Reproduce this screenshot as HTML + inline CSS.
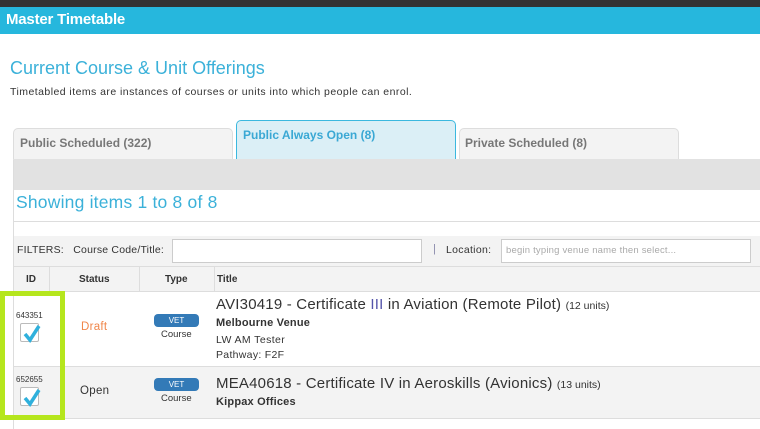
<!DOCTYPE html><html><head><style>
body{margin:0;width:760px;height:429px;overflow:hidden;background:#fff;font-family:"Liberation Sans",sans-serif;position:relative}
div,span{position:absolute;box-sizing:border-box}
.t{white-space:nowrap}
</style></head><body>
<div style="left:0;top:0;width:760px;height:7px;background:#333"></div>
<div style="left:0;top:7px;width:760px;height:27px;background:#26b7dd"></div>
<div class="t" style="left:6px;top:11px;color:#fff;font-weight:bold;font-size:15px;letter-spacing:-0.2px">Master Timetable</div>
<div class="t" style="left:10px;top:58px;color:#3bb1d9;font-size:18px">Current Course &amp; Unit Offerings</div>
<div class="t" style="left:10px;top:86px;color:#333;font-size:10.5px;letter-spacing:0.45px">Timetabled items are instances of courses or units into which people can enrol.</div>
<div style="left:13px;top:128px;width:220px;height:32px;background:#f3f3f3;border:1px solid #ddd;border-bottom:none;border-radius:5px 5px 0 0"></div>
<div class="t" style="left:20px;top:136px;color:#777;font-weight:bold;font-size:12px">Public Scheduled (322)</div>
<div style="left:236px;top:120px;width:220px;height:40px;background:#dbeff6;border:1px solid #3bb8df;border-bottom:none;border-radius:5px 5px 0 0"></div>
<div class="t" style="left:243px;top:128px;color:#3aa8d4;font-weight:bold;font-size:12px">Public Always Open (8)</div>
<div style="left:459px;top:128px;width:220px;height:32px;background:#f3f3f3;border:1px solid #ddd;border-bottom:none;border-radius:5px 5px 0 0"></div>
<div class="t" style="left:465px;top:136px;color:#777;font-weight:bold;font-size:12px">Private Scheduled (8)</div>
<div style="left:13px;top:159px;width:747px;height:31px;background:#e2e2e2"></div>
<div style="left:13px;top:160px;width:1px;height:269px;background:#ddd"></div>
<div class="t" style="left:16px;top:192px;color:#3bb1d9;font-size:17.5px;letter-spacing:0.2px">Showing items 1 to 8 of 8</div>
<div style="left:14px;top:221px;width:746px;height:1px;background:#ddd"></div>
<div style="left:14px;top:236px;width:746px;height:31px;background:#f3f3f3;border-bottom:1px solid #ddd"></div>
<div class="t" style="left:17px;top:244px;color:#333;font-size:10.5px;letter-spacing:0.2px">FILTERS:&nbsp;&nbsp; Course Code/Title:</div>
<div style="left:172px;top:239px;width:250px;height:24px;background:#fff;border:1px solid #ccc"></div>
<div class="t" style="left:433px;top:243px;color:#88a;font-size:11px">|</div>
<div class="t" style="left:446px;top:244px;color:#333;font-size:10.5px;letter-spacing:0.3px">Location:</div>
<div style="left:501px;top:239px;width:250px;height:24px;background:#fff;border:1px solid #ccc"></div>
<div class="t" style="left:506px;top:245px;color:#aaa;font-size:9.5px;letter-spacing:0.2px">begin typing venue name then select...</div>
<div style="left:14px;top:267px;width:746px;height:25px;background:#f3f3f3;border-bottom:1px solid #ddd"></div>
<div style="left:49px;top:267px;width:1px;height:25px;background:#ddd"></div>
<div style="left:139px;top:267px;width:1px;height:25px;background:#ddd"></div>
<div style="left:214px;top:267px;width:1px;height:25px;background:#ddd"></div>
<div class="t" style="left:26px;top:274px;color:#333;font-weight:bold;font-size:10px">ID</div>
<div class="t" style="left:79px;top:274px;color:#333;font-weight:bold;font-size:10px">Status</div>
<div class="t" style="left:165px;top:274px;color:#333;font-weight:bold;font-size:10px">Type</div>
<div class="t" style="left:217px;top:274px;color:#333;font-weight:bold;font-size:10px">Title</div>
<div style="left:14px;top:366px;width:746px;height:53px;background:#f3f3f3;border-top:1px solid #ddd;border-bottom:1px solid #ddd"></div>
<div class="t" style="left:16px;top:311px;color:#333;font-size:8px">643351</div>
<div class="t" style="left:16px;top:375px;color:#333;font-size:8px">652655</div>
<div style="left:20px;top:323px;width:19px;height:19px;border:1px solid #bbb;border-radius:2px;background:#fff"></div>
<div style="left:20px;top:387px;width:19px;height:19px;border:1px solid #bbb;border-radius:2px;background:#fff"></div>
<svg style="position:absolute;left:20px;top:320px" width="22" height="26"><path d="M5 14 L10 20 L19 6" stroke="#2fb0dc" stroke-width="3.5" fill="none"/></svg>
<svg style="position:absolute;left:20px;top:384px" width="22" height="26"><path d="M5 14 L10 20 L19 6" stroke="#2fb0dc" stroke-width="3.5" fill="none"/></svg>
<div style="left:0;top:291px;width:65px;height:129px;border:5px solid #b5e61d"></div>
<div class="t" style="left:81px;top:321px;color:#f0864a;font-size:11.5px;letter-spacing:0.3px">Draft</div>
<div class="t" style="left:80px;top:385px;color:#333;font-size:11.5px;letter-spacing:0.3px">Open</div>
<div style="left:154px;top:314px;width:45px;height:13px;background:#337ab7;border-radius:4px;color:#fff;font-size:8px;text-align:center;line-height:13px">VET</div>
<div class="t" style="left:161px;top:329px;color:#333;font-size:9.5px">Course</div>
<div style="left:154px;top:378px;width:45px;height:13px;background:#337ab7;border-radius:4px;color:#fff;font-size:8px;text-align:center;line-height:13px">VET</div>
<div class="t" style="left:161px;top:393px;color:#333;font-size:9.5px">Course</div>
<div class="t" style="left:216px;top:296px;color:#333;font-size:15px;letter-spacing:0.2px">AVI30419 - Certificate <span style="position:static;color:#55a">III</span> in Aviation (Remote Pilot) <span style="position:static;font-size:10.5px;letter-spacing:0">(12 units)</span></div>
<div class="t" style="left:216px;top:317px;color:#333;font-weight:bold;font-size:11px;letter-spacing:0.2px">Melbourne Venue</div>
<div class="t" style="left:216px;top:334px;color:#333;font-size:10.5px;letter-spacing:0.4px">LW AM Tester</div>
<div class="t" style="left:216px;top:349px;color:#333;font-size:10.5px;letter-spacing:0.3px">Pathway: F2F</div>
<div class="t" style="left:216px;top:375px;color:#333;font-size:15px;letter-spacing:0.2px">MEA40618 - Certificate IV in Aeroskills (Avionics) <span style="position:static;font-size:10.5px;letter-spacing:0">(13 units)</span></div>
<div class="t" style="left:216px;top:396px;color:#333;font-weight:bold;font-size:11px;letter-spacing:0.2px">Kippax Offices</div>
</body></html>
